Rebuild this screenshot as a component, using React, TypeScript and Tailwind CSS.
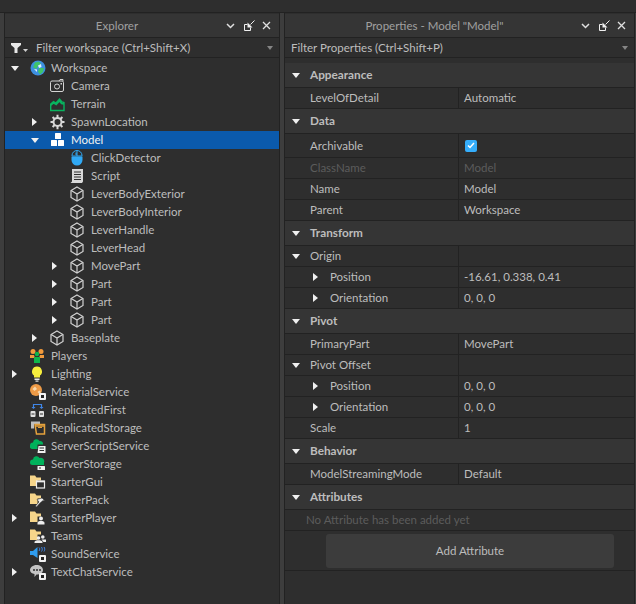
import React from 'react';

type IconName =
    | 'globe' | 'camera' | 'terrain' | 'gear' | 'model' | 'click' | 'script' | 'cube'
    | 'players' | 'bulb' | 'material' | 'repFirst' | 'repStorage' | 'cloudScript' | 'cloudStorage'
    | 'folderGui' | 'folderPack' | 'folderPlayer' | 'folderTeams' | 'sound' | 'chat';

type TreeItem = { name: string; depth: number; icon: IconName; arrow?: 'right' | 'down'; selected?: boolean };

const tree: TreeItem[] = [
    { name: 'Workspace', depth: 0, icon: 'globe', arrow: 'down' },
    { name: 'Camera', depth: 1, icon: 'camera' },
    { name: 'Terrain', depth: 1, icon: 'terrain' },
    { name: 'SpawnLocation', depth: 1, icon: 'gear', arrow: 'right' },
    { name: 'Model', depth: 1, icon: 'model', arrow: 'down', selected: true },
    { name: 'ClickDetector', depth: 2, icon: 'click' },
    { name: 'Script', depth: 2, icon: 'script' },
    { name: 'LeverBodyExterior', depth: 2, icon: 'cube' },
    { name: 'LeverBodyInterior', depth: 2, icon: 'cube' },
    { name: 'LeverHandle', depth: 2, icon: 'cube' },
    { name: 'LeverHead', depth: 2, icon: 'cube' },
    { name: 'MovePart', depth: 2, icon: 'cube', arrow: 'right' },
    { name: 'Part', depth: 2, icon: 'cube', arrow: 'right' },
    { name: 'Part', depth: 2, icon: 'cube', arrow: 'right' },
    { name: 'Part', depth: 2, icon: 'cube', arrow: 'right' },
    { name: 'Baseplate', depth: 1, icon: 'cube', arrow: 'right' },
    { name: 'Players', depth: 0, icon: 'players' },
    { name: 'Lighting', depth: 0, icon: 'bulb', arrow: 'right' },
    { name: 'MaterialService', depth: 0, icon: 'material' },
    { name: 'ReplicatedFirst', depth: 0, icon: 'repFirst' },
    { name: 'ReplicatedStorage', depth: 0, icon: 'repStorage' },
    { name: 'ServerScriptService', depth: 0, icon: 'cloudScript' },
    { name: 'ServerStorage', depth: 0, icon: 'cloudStorage' },
    { name: 'StarterGui', depth: 0, icon: 'folderGui' },
    { name: 'StarterPack', depth: 0, icon: 'folderPack' },
    { name: 'StarterPlayer', depth: 0, icon: 'folderPlayer', arrow: 'right' },
    { name: 'Teams', depth: 0, icon: 'folderTeams' },
    { name: 'SoundService', depth: 0, icon: 'sound' },
    { name: 'TextChatService', depth: 0, icon: 'chat', arrow: 'right' },
];

const Badge = () => (
    <>
        <rect x="9" y="9" width="7" height="7" rx="1" fill="#f2f2f2" />
        <rect x="11" y="11" width="3" height="3" fill="#222" />
    </>
);

const Folder = () => (
    <path d="M0 1.5h5l1.5 2H11v3H7.5v5.5H0z" fill="#f6d58a" />
);

const TreeIcon = ({ name }: { name: IconName }) => {
    const parts: Record<IconName, React.ReactNode> = {
        globe: (
            <>
                <circle cx="8" cy="8" r="7.5" fill="#3d8fe0" />
                <path d="M5 2.5 9 1.5 11 4 8 6 6.5 9 3 7.5z" fill="#3fc46a" />
                <path d="M9 8h5l-1 4-3 2.5-2-3z" fill="#3fc46a" />
                <path d="M8 5.5 11 4l.5 3L9 8zM4 9l3 .5L7 12z" fill="#dff1ff" />
            </>
        ),
        camera: (
            <>
                <rect x="0.5" y="3" width="13" height="10.5" rx="1.5" fill="none" stroke="#d4d4d4" />
                <circle cx="7" cy="8.5" r="2.5" fill="none" stroke="#d4d4d4" />
                <path d="M9 3l1-1.5h3V3" fill="none" stroke="#d4d4d4" />
                <rect x="10.5" y="5" width="1.5" height="1.5" fill="#d4d4d4" />
            </>
        ),
        terrain: (
            <path d="M.7 14.5V8L3.5 5.5 6 7 9.5 3l2.5 3 2 .5v8z M.7 9.5 3.5 7l2.7 1.5L9.5 5l2 2.5 2.5.5" fill="none" stroke="#08b35e" strokeWidth="1.4" />
        ),
        gear: (
            <>
                <circle cx="7.5" cy="8" r="4" fill="none" stroke="#d8d8d8" strokeWidth="2" />
                <path d="M7.5 .8v3M7.5 12v3.2M.5 8h3M11.5 8h3M2.6 3 4.6 5M10.4 11l2 2M12.4 3l-2 2M4.6 11l-2 2" stroke="#d8d8d8" strokeWidth="2" />
            </>
        ),
        model: (
            <>
                <rect x="5" y="1" width="6" height="6" rx="0.5" fill="#fff" />
                <rect x="1" y="8" width="6" height="6" rx="0.5" fill="#fff" />
                <rect x="8" y="8" width="6" height="6" rx="0.5" fill="#fff" />
            </>
        ),
        click: (
            <>
                <path d="M1.5 6.5h11v3.5a5.5 5.5 0 0 1-11 0z" fill="#30a9f5" />
                <path d="M2 6V5.5a5 5 0 0 1 10 0V6zM7 1v5" fill="none" stroke="#30a9f5" />
                <rect x="5.5" y="2.5" width="1.2" height="2.5" fill="#30a9f5" />
            </>
        ),
        script: (
            <>
                <path d="M2 1h11v12.5l-1 1.5H0.5l1.5-1.5z" fill="#d8d8d8" />
                <path d="M4 4h7M4 6.5h7M4 9h7M4 11.5h7" stroke="#2e2e2e" />
            </>
        ),
        cube: (
            <>
                <path d="M7 1 13 4.5v7L7 15 1 11.500V4.500z" fill="none" stroke="#d2d2d2" strokeWidth="1.2" />
                <path d="M1.200 4.500 7 8l5.800-3.500M7 8v7" fill="none" stroke="#d2d2d2" strokeWidth="1.2" />
            </>
        ),
        players: (
            <>
                <circle cx="3" cy="3.500" r="2.500" fill="#f29a3c" />
                <circle cx="11" cy="3.500" r="2.500" fill="#f29a3c" />
                <path d="M0 7h4l1 3H0zM10 7h4v3H9z" fill="#f29a3c" />
                <circle cx="7" cy="6" r="2.200" fill="#0fb54a" />
                <rect x="4" y="9" width="6" height="6" fill="#0fb54a" />
            </>
        ),
        bulb: (
            <>
                <path d="M7 .5a5 5 0 0 1 3 9v2H4v-2a5 5 0 0 1 3-9z" fill="#f7ef3d" />
                <rect x="4.500" y="12.500" width="5" height="1.500" fill="#e8e8e8" />
                <rect x="5.500" y="14.500" width="3" height="1.200" fill="#e8e8e8" />
            </>
        ),
        material: (
            <>
                <circle cx="6" cy="6" r="6" fill="#ee9b47" />
                <path d="M2.500 5 5 2.500 7 5 4.500 7zM7.500 8l2-1.500L11 8l-2 1.500z" fill="#f7d9ae" />
                <Badge />
            </>
        ),
        repFirst: (
            <>
                <path d="M3.500 6V2.500h8V6" fill="none" stroke="#3f86e8" strokeWidth="1.2" />
                <path d="M1.500 5h4l-2 2zM9.500 5h4l-2 2z" fill="#3f86e8" />
                <rect x="0.500" y="9" width="5" height="6" rx="1" fill="#e2e2e2" />
                <rect x="9" y="9" width="5" height="6" rx="1" fill="#e2e2e2" />
                <path d="M1.500 12h3M10 12h3" stroke="#2e2e2e" />
            </>
        ),
        repStorage: (
            <>
                <path d="M1 6V1.500h9V4H4v4.500H1z" fill="#bdbdbd" />
                <path d="M5 4.500h9.500V14H6.500z" fill="#2e2e2e" stroke="#e6a23c" strokeWidth="1.500" />
                <path d="M8 7.500h4" stroke="#e6a23c" />
                <path d="M5 6h9.500" stroke="#e6a23c" strokeWidth="1.500" />
            </>
        ),
        cloudScript: (
            <>
                <path d="M0 7.500A3 3 0 0 1 3 4.500 3.500 3.500 0 0 1 9.500 3 3 3 0 0 1 13 6.500H7.500V11H2.500A2.500 2.500 0 0 1 0 7.500z" fill="#00b25b" />
                <path d="M8.500 8H15.500V15H7.500z" fill="#f0f0f0" />
                <path d="M9.500 10h4.500M9.500 12.500h4.500" stroke="#2e2e2e" />
            </>
        ),
        cloudStorage: (
            <>
                <path d="M0 6.500A3 3 0 0 1 3 3.500 3.500 3.500 0 0 1 9.500 2 3.500 3.500 0 0 1 14 6.500V9H2.500A2.500 2.500 0 0 1 0 6.500z" fill="#00b25b" />
                <rect x="7.500" y="10" width="7.500" height="4" rx="0.500" fill="#f0f0f0" />
                <rect x="9" y="11.500" width="2" height="1" fill="#2e2e2e" />
            </>
        ),
        folderGui: (
            <>
                <Folder />
                <rect x="6.500" y="7" width="8" height="7" fill="#2e2e2e" stroke="#ededed" strokeWidth="1.200" />
                <path d="M6.500 7.600h8" stroke="#ededed" strokeWidth="1.500" />
            </>
        ),
        folderPack: (
            <>
                <Folder />
                <path d="M7 7.500 12 6l3 3-2-.5L10 11l-3.500 4-1-1 3.500-4z" fill="#ededed" stroke="#2e2e2e" strokeWidth="0.500" />
            </>
        ),
        folderPlayer: (
            <>
                <Folder />
                <circle cx="11" cy="8.500" r="2" fill="#ededed" />
                <path d="M7.500 14.500V13c0-1.500 1.500-2 3.500-2s3.500.5 3.500 2v1.500z" fill="#ededed" />
            </>
        ),
        folderTeams: (
            <>
                <Folder />
                <circle cx="8.500" cy="10" r="1.800" fill="#ededed" />
                <circle cx="12.800" cy="9" r="1.800" fill="#ededed" />
                <path d="M4.500 15v-1c0-1.200 2-1.800 4-1.800s4 .6 4 1.800v1zM11.500 11.500h4.500v2.500h-2.500z" fill="#ededed" />
            </>
        ),
        sound: (
            <>
                <path d="M0 5h3l4.500-4v11L3 9H0z" fill="#2f9df0" />
                <path d="M9 1.500c1 1 1 2 0 3.500M11.500 1c1 1.500 1 3 0 4.500M14 1c1 1.500 1 3 0 4.500" fill="none" stroke="#3f86e8" strokeWidth="1" />
                <Badge />
            </>
        ),
        chat: (
            <>
                <path d="M6.500 1C10 1 13 3 13 6s-3 4.500-6.500 4.500L4.500 13V10C2 9.500 0 8.500 0 6s3-5 6.500-5z" fill="#c4c4c4" />
                <circle cx="4" cy="6" r="1" fill="#2e2e2e" />
                <circle cx="7" cy="6" r="1" fill="#2e2e2e" />
                <circle cx="10" cy="6" r="1" fill="#2e2e2e" />
                <Badge />
            </>
        ),
    };
    return (
        <svg width="16" height="16" viewBox="0 0 16 16" className="shrink-0">
            {parts[name]}
        </svg>
    );
};

const Arrow = ({ dir }: { dir: 'right' | 'down' }) =>
    dir === 'down' ? (
        <svg width="8" height="5" viewBox="0 0 8 5"><path d="M0 0h8L4 5z" fill="#f0f0f0" /></svg>
    ) : (
        <svg width="5" height="8" viewBox="0 0 5 8"><path d="M0 0l5 4-5 4z" fill="#f0f0f0" /></svg>
    );

const PanelHeader = ({ title }: { title: string }) => (
    <div className="flex h-[24px] items-center border-b border-[#222222] bg-[#353535]">
        <div className="flex-1 text-center text-[#a0a0a0]">{title}</div>
        <div className="-ml-[3px] mr-[3px] flex w-[50px] items-center gap-[7px]">
            <svg width="9" height="6" viewBox="0 0 9 6"><path d="M1 1l3.500 3.500L8 1" fill="none" stroke="#e0e0e0" strokeWidth="1.500" /></svg>
            <svg width="11" height="11" viewBox="0 0 11 11" className="ml-[2px]">
                <path d="M.5 4.500h3M.5 4.500v6h6v-3" fill="none" stroke="#f0f0f0" />
                <path d="M10.500.5 6.500 4.500" stroke="#f0f0f0" />
                <path d="M3.500 2.500l0 5 5 0z" fill="#f0f0f0" />
            </svg>
            <svg width="9" height="9" viewBox="0 0 9 9"><path d="M1 1l7 7M8 1 1 8" stroke="#e0e0e0" strokeWidth="1.300" /></svg>
        </div>
    </div>
);

const FilterBar = ({ label, funnel }: { label: string; funnel?: boolean }) => (
    <div className="flex h-[20px] items-center border-b border-[#222222] bg-[#2e2e2e]">
        {funnel ? (
            <div className="flex w-[31px] items-center pl-[6px]">
                <svg width="10" height="10" viewBox="0 0 10 10"><path d="M0 0h10v2L6.500 5v5h-3V5L0 2z" fill="#e8e8e8" /></svg>
                <svg width="5" height="3" viewBox="0 0 5 3" className="ml-[2px] mt-[6px]"><path d="M0 0h5L2.500 3z" fill="#cfcfcf" /></svg>
            </div>
        ) : (
            <div className="w-[6px]" />
        )}
        <div className="flex-1 text-[#bdbdbd]">{label}</div>
        <svg width="6" height="4" viewBox="0 0 6 4" className="mr-[6px]"><path d="M0 0h6L3 4z" fill="#858585" /></svg>
    </div>
);

const TreeRow = ({ item }: { item: TreeItem }) => {
    const pad = ['pl-0', 'pl-[20px]', 'pl-[40px]'][item.depth];
    return (
        <div className={`flex h-[18px] items-center ${pad} ${item.selected ? 'bg-[#0b5aac] text-[#f2f2f2]' : 'text-[#bdbdbd]'}`}>
            <div className="flex w-[19px] justify-center">{item.arrow && <Arrow dir={item.arrow} />}</div>
            <div className="ml-[6px] flex w-[21px]"><TreeIcon name={item.icon} /></div>
            <span>{item.name}</span>
        </div>
    );
};

const Section = ({ title }: { title: string }) => (
    <div className="flex h-[25px] items-center border-b border-[#222222] bg-[#353535] text-[11.75px] font-bold text-[#bdbdbd]">
        <div className="flex w-[25px] justify-center pr-[3px]"><Arrow dir="down" /></div>
        <span>{title}</span>
    </div>
);

type PropRowProps = {
    label: string;
    value?: React.ReactNode;
    arrow?: 'right' | 'down';
    nested?: boolean;
    dim?: boolean;
    tall?: boolean;
};

const PropRow = ({ label, value, arrow, nested, dim, tall }: PropRowProps) => (
    <div className={`flex ${tall ? 'h-[24px]' : 'h-[21px]'} border-b border-[#222222] ${dim ? 'text-[#5c5c5c]' : 'text-[#bdbdbd]'}`}>
        <div className="flex w-[174px] items-center border-r border-[#222222]">
            <div className={`flex justify-center ${nested ? 'w-[45px] pl-[15px]' : 'w-[25px] pr-[3px]'}`}>{arrow && <Arrow dir={arrow} />}</div>
            <span>{label}</span>
        </div>
        <div className="flex flex-1 items-center pl-[5px]">{value}</div>
    </div>
);

const Checkbox = () => (
    <div className="ml-[1px] flex h-[12px] w-[12px] items-center justify-center rounded-[2px] bg-[#35aefc]">
        <svg width="8" height="7" viewBox="0 0 8 7"><path d="M1 3.500 3 5.500 7 1" fill="none" stroke="#fff" strokeWidth="1.500" /></svg>
    </div>
);

export default function App() {
    return (
        <div className="flex h-[604px] w-[636px] flex-col overflow-hidden bg-[#2e2e2e] text-[11.5px] leading-none [font-family:Lato,sans-serif]">
            <div className="h-[13px] border-b border-[#222222] bg-[#2e2e2e]" />
            <div className="flex flex-1">
                <div className="w-[4px] bg-[#3d3d3d]" />
                <div className="w-[276px] border-x border-[#222222] bg-[#2e2e2e] pt-px">
                    <PanelHeader title="Explorer" />
                    <FilterBar label="Filter workspace (Ctrl+Shift+X)" funnel />
                    <div className="pt-px">
                        {tree.map((item, i) => <TreeRow key={i} item={item} />)}
                    </div>
                </div>
                <div className="w-[4px] bg-[#3d3d3d]" />
                <div className="flex-1 border-x border-[#222222] bg-[#2e2e2e] pt-px">
                    <PanelHeader title={'Properties - Model "Model"'} />
                    <FilterBar label="Filter Properties (Ctrl+Shift+P)" />
                    <div className="pt-[5px]">
                        <Section title="Appearance" />
                        <PropRow label="LevelOfDetail" value="Automatic" />
                        <Section title="Data" />
                        <PropRow label="Archivable" value={<Checkbox />} tall />
                        <PropRow label="ClassName" value="Model" dim />
                        <PropRow label="Name" value="Model" />
                        <PropRow label="Parent" value="Workspace" />
                        <Section title="Transform" />
                        <PropRow label="Origin" arrow="down" />
                        <PropRow label="Position" value="-16.61, 0.338, 0.41" arrow="right" nested />
                        <PropRow label="Orientation" value="0, 0, 0" arrow="right" nested />
                        <Section title="Pivot" />
                        <PropRow label="PrimaryPart" value="MovePart" />
                        <PropRow label="Pivot Offset" arrow="down" />
                        <PropRow label="Position" value="0, 0, 0" arrow="right" nested />
                        <PropRow label="Orientation" value="0, 0, 0" arrow="right" nested />
                        <PropRow label="Scale" value="1" />
                        <Section title="Behavior" />
                        <PropRow label="ModelStreamingMode" value="Default" />
                        <Section title="Attributes" />
                        <div className="flex h-[21px] items-center border-b border-[#222222] pl-[21px] text-[#5c5c5c]">
                            No Attribute has been added yet
                        </div>
                        <div className="flex h-[40px] items-center border-b border-[#222222] pl-[41px] pt-px">
                            <div className="flex h-[34px] w-[288px] items-center justify-center rounded-[3px] bg-[#3c3c3c] text-[#bdbdbd]">
                                Add Attribute
                            </div>
                        </div>
                    </div>
                </div>
                <div className="w-[1px] bg-[#3d3d3d]" />
            </div>
        </div>
    );
}
